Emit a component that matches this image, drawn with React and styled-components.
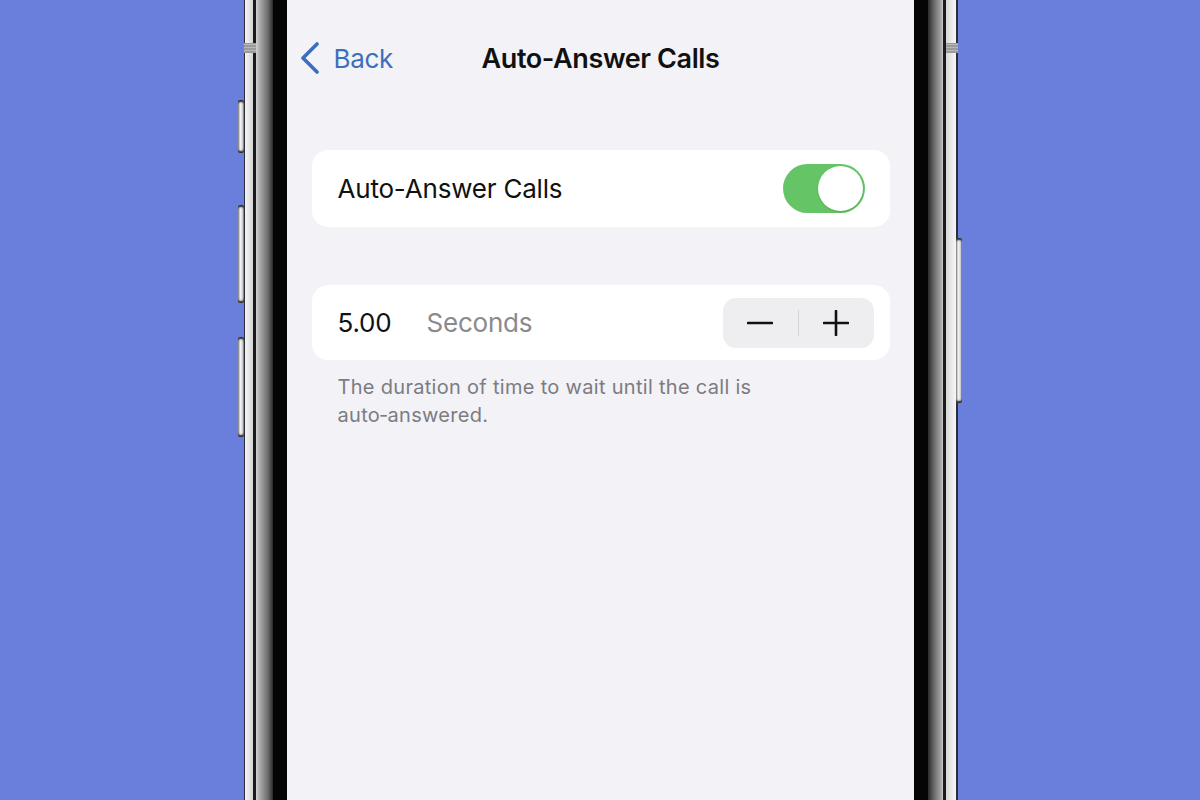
import styled, { createGlobalStyle } from "styled-components";

const GlobalStyle = createGlobalStyle`
  html, body {
    margin: 0;
    padding: 0;
    background: #6a7edb;
    overflow: hidden;
  }
  body {
    font-family: Inter, "Noto Sans", "Liberation Sans", sans-serif;
    -webkit-font-smoothing: antialiased;
  }
`;

// Blue backdrop that holds the handset in the middle
const Stage = styled.div`
  width: 1200px;
  height: 800px;
  display: flex;
  justify-content: center;
  overflow: hidden;
`;

// Steel band around the handset, drawn as a horizontal gradient
const Frame = styled.div`
  position: relative;
  width: 714px;
  height: 800px;
  margin-left: 1px;
  box-sizing: border-box;
  padding: 0 30px 0 29px;
  display: flex;
  background: linear-gradient(
    90deg,
    #2b2d3a 0px,
    #2b2d3a 1px,
    #f6f6f6 1px,
    #d4d4d4 9px,
    #1a1a1a 9px,
    #1a1a1a 12px,
    #d2d2d2 12px,
    #a8a8a8 16px,
    #6c6c6c 24px,
    #2a2a2a 29px,
    #2a2a2a calc(100% - 30px),
    #6a6a6a calc(100% - 24px),
    #a5a5a5 calc(100% - 17px),
    #cfcfcf calc(100% - 15px),
    #1a1a1a calc(100% - 15px),
    #1a1a1a calc(100% - 12px),
    #d8d8d8 calc(100% - 12px),
    #f6f6f6 calc(100% - 2px),
    #2b2d3a calc(100% - 2px)
  );
`;

// Black glass edge between the band and the display
const Bezel = styled.div`
  flex: 1;
  display: flex;
  background: #050505;
  padding: 0 14px;
`;

const Screen = styled.div`
  flex: 1;
  background: #f2f2f7;
  display: flex;
  flex-direction: column;
`;

// Hardware buttons and antenna lines sit on top of the band
const SideKey = styled.div`
  position: absolute;
  top: ${(p) => p.$top}px;
  height: ${(p) => p.$height}px;
  width: 6px;
  ${(p) => (p.$right ? "right: -4px;" : "left: -6px;")}
  border-radius: 2px;
  background: linear-gradient(
    90deg,
    #8d8d8d,
    #f2f2f2 40%,
    #dcdcdc 70%,
    #7a7a7a
  );
  box-shadow: inset 0 3px 2px -1px #222, inset 0 -3px 2px -1px #222;
`;

const AntennaLine = styled.div`
  position: absolute;
  top: 43px;
  height: 10px;
  width: 12px;
  ${(p) => (p.$right ? "right: 0;" : "left: 0;")}
  background: repeating-linear-gradient(
    0deg,
    #9a9a9a 0px,
    #9a9a9a 2px,
    #b8b8b8 2px,
    #b8b8b8 3px
  );
`;

const NavBar = styled.div`
  margin-top: 36px;
  height: 44px;
  display: grid;
  grid-template-columns: 1fr auto 1fr;
  align-items: center;
  padding-left: 13px;
`;

const BackLink = styled.div`
  display: flex;
  align-items: center;
  gap: 14px;
  color: #3b6fbd;
  font-size: 26px;
  letter-spacing: -0.3px;
`;

const Title = styled.div`
  font-size: 27px;
  font-weight: 600;
  color: #111;
  letter-spacing: -0.4px;
  transform: translateX(-6px);
`;

const Group = styled.div`
  margin: ${(p) => p.$top}px 24px 0 25px;
  height: ${(p) => p.$height}px;
  background: #ffffff;
  border-radius: 16px;
  display: flex;
  align-items: center;
  padding: 0 ${(p) => p.$padRight}px 0 26px;
`;

const Label = styled.span`
  flex: 1;
  font-size: 26px;
  color: #111;
  letter-spacing: -0.2px;
`;

const Value = styled.span`
  font-size: 26px;
  color: ${(p) => (p.$muted ? "#8a8a8e" : "#111")};
  margin-right: ${(p) => p.$gap || 0}px;
  letter-spacing: -0.2px;
`;

const Spacer = styled.div`
  flex: 1;
`;

// iOS style on/off switch
const Switch = styled.div`
  width: 82px;
  height: 49px;
  border-radius: 25px;
  background: #65c466;
  display: flex;
  align-items: center;
  justify-content: flex-end;
  padding: 2px;
  box-sizing: border-box;
`;

const Knob = styled.div`
  width: 45px;
  height: 45px;
  border-radius: 50%;
  background: #ffffff;
  box-shadow: 0 1px 2px rgba(0, 0, 0, 0.15);
`;

const Stepper = styled.div`
  width: 151px;
  height: 50px;
  border-radius: 13px;
  background: #eeeef0;
  display: flex;
  align-items: center;
`;

const StepButton = styled.div`
  flex: 1;
  height: 100%;
  display: flex;
  align-items: center;
  justify-content: center;
`;

const StepDivider = styled.div`
  width: 1px;
  height: 26px;
  background: #d3d3d7;
`;

const Footnote = styled.p`
  margin: 13px 0 0 51px;
  width: 425px;
  font-size: 20px;
  line-height: 28px;
  color: #7c7c81;
  letter-spacing: 0.3px;
`;

const Chevron = () => (
  <svg width="20" height="32" viewBox="0 0 20 32">
    <path
      d="M17 2 L3 16 L17 30"
      fill="none"
      stroke="#3b6fbd"
      strokeWidth="3.6"
      strokeLinecap="round"
      strokeLinejoin="round"
    />
  </svg>
);

const Minus = () => (
  <svg width="26" height="26" viewBox="0 0 26 26">
    <path d="M1 13 H25" stroke="#111" strokeWidth="2.6" strokeLinecap="round" />
  </svg>
);

const Plus = () => (
  <svg width="26" height="26" viewBox="0 0 26 26">
    <path
      d="M1 13 H25 M13 1 V25"
      stroke="#111"
      strokeWidth="2.6"
      strokeLinecap="round"
    />
  </svg>
);

const App = () => {
  return (
    <>
      <GlobalStyle />
      <Stage>
        <Frame>
          <SideKey $top={100} $height={53} />
          <SideKey $top={205} $height={98} />
          <SideKey $top={337} $height={100} />
          <SideKey $right $top={238} $height={165} />
          <AntennaLine />
          <AntennaLine $right />
          <Bezel>
            <Screen>
              <NavBar>
                <BackLink>
                  <Chevron />
                  Back
                </BackLink>
                <Title>Auto-Answer Calls</Title>
                <div />
              </NavBar>

              <Group $top={70} $height={77} $padRight={25}>
                <Label>Auto-Answer Calls</Label>
                <Switch>
                  <Knob />
                </Switch>
              </Group>

              <Group $top={58} $height={75} $padRight={16}>
                <Value $gap={35}>5.00</Value>
                <Value $muted>Seconds</Value>
                <Spacer />
                <Stepper>
                  <StepButton>
                    <Minus />
                  </StepButton>
                  <StepDivider />
                  <StepButton>
                    <Plus />
                  </StepButton>
                </Stepper>
              </Group>

              <Footnote>
                The duration of time to wait until the call is auto&#8209;answered.
              </Footnote>
            </Screen>
          </Bezel>
        </Frame>
      </Stage>
    </>
  );
};

export default App;
